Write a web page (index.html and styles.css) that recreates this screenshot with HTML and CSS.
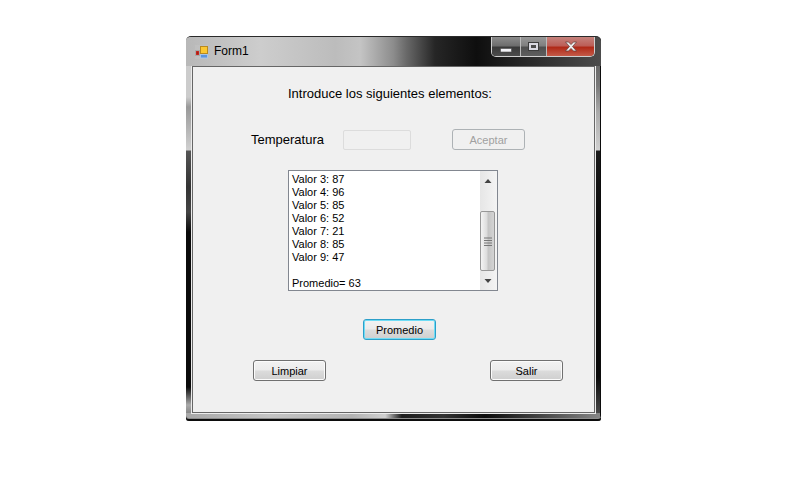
FILE: index.html
```html
<!DOCTYPE html>
<html lang="en">
<head>
    <meta charset="UTF-8">
    <title>Form1</title>
    <link rel="stylesheet" href="styles.css">
</head>
<body>
    <div class="window">
        <div class="titlebar">
            <svg class="app-icon" width="16" height="16" viewBox="0 0 16 16">
                <rect x="0" y="2" width="13" height="14" fill="#c4c4c4" opacity="0.5"/>
                <rect x="0.5" y="7.5" width="4" height="5" fill="#d63228" stroke="#a8a8a8"/>
                <rect x="1.5" y="8.5" width="2" height="3" fill="#a81c14"/>
                <rect x="5.5" y="3.5" width="7" height="7" fill="#fcc832" stroke="#b98a20"/>
                <rect x="5.5" y="11.5" width="7" height="3.5" fill="#5b94e0" stroke="#a8c4e8"/>
            </svg>
            <span class="title">Form1</span>
            <div class="caption">
                <div class="cap-btn cap-min">
                    <svg width="14" height="14" viewBox="0 0 14 14"><rect x="1.5" y="8.5" width="11" height="3.5" fill="#f2f2f6" stroke="#4a4a4a" stroke-width="0.6"/></svg>
                </div>
                <div class="cap-btn cap-max">
                    <svg width="13" height="12" viewBox="0 0 13 12"><rect x="1" y="1" width="11" height="9" fill="#3c3c3c"/><rect x="2" y="2" width="9" height="7" fill="#d8d8e0"/><rect x="4" y="4" width="5" height="3" fill="#4a4a4a"/></svg>
                </div>
                <div class="cap-btn cap-close">
                    <svg width="14" height="12" viewBox="0 0 14 12"><path d="M1.5 1h3l2.5 2.6 2.5-2.6h3l-4 4.5 4 4.5h-3l-2.5-2.6-2.5 2.6h-3l4-4.5z" fill="#f0f0f0" stroke="#5a3a38" stroke-width="0.7"/></svg>
                </div>
            </div>
        </div>
        <div class="client">
            <p class="heading">Introduce los siguientes elementos:</p>

            <div class="input-row">
                <span class="label">Temperatura</span>
                <input type="text" class="txtbox" disabled>
                <button class="btn btn-off" disabled>Aceptar</button>
            </div>

            <div class="listbox">
                <div class="list-text">
                    <div>Valor 3: 87</div>
                    <div>Valor 4: 96</div>
                    <div>Valor 5: 85</div>
                    <div>Valor 6: 52</div>
                    <div>Valor 7: 21</div>
                    <div>Valor 8: 85</div>
                    <div>Valor 9: 47</div>
                    <div>&nbsp;</div>
                    <div>Promedio= 63</div>
                </div>
                <div class="scrollbar">
                    <svg class="arrow" width="17" height="40" viewBox="0 0 17 40"><path d="M8 8l3.5 4h-7z" fill="#444"/></svg>
                    <div class="thumb">
                        <svg width="8" height="9" viewBox="0 0 8 9"><path d="M0 1h8M0 3.5h8M0 6h8M0 8.5h8" stroke="#777" fill="none"/></svg>
                    </div>
                    <svg class="arrow" width="17" height="19" viewBox="0 0 17 19"><path d="M4.5 8h7l-3.5 4z" fill="#444"/></svg>
                </div>
            </div>

            <button class="btn btn-focus">Promedio</button>

            <div class="bottom-row">
                <button class="btn">Limpiar</button>
                <button class="btn">Salir</button>
            </div>
        </div>
    </div>
</body>
</html>
```

FILE: styles.css
```css
* {
    box-sizing: border-box;
}
body {
    margin: 0;
    background-color: #fff;
    font-family: "Liberation Sans", Arial, sans-serif;
    color: #000;
}
.window {
    width: 415px;
    height: 385px;
    margin: 36px 0 0 186px;
    padding: 0 6px 8px 6px;
    display: flex;
    flex-direction: column;
    border-radius: 5px 5px 3px 3px;
    border-top: 1px solid #2a2a2a;
    overflow: hidden;
    background:
        linear-gradient(90deg, #a8a8a8 0, #c4c4c4 20%, #b4b4b4 40%, #d0d0d0 48%, #1c1c1c 52%, #333 62%, #0a0a0a 72%, #444 85%, #888 100%) bottom / 100% 8px no-repeat,
        linear-gradient(180deg, #ccc 0, #ccc 60px, #999 70px, #d0d0d0 113px, #555 114px, #333 150px, #444 175px, #0a0a0a 195px, #0a0a0a 350px, #aaa 368px, #666 384px) left / 6px 100% no-repeat,
        linear-gradient(180deg, #555 0, #777 48px, #aaa 75px, #d0d0d0 113px, #1c1c1c 114px, #0a0a0a 200px, #0a0a0a 340px, #555 384px) right / 6px 100% no-repeat;
    box-shadow: inset 0 -2px 0 #0c0c0c, inset 0 -3px 0 #8c8c8c, inset -1px 0 0 #0c0c0c;
}
.titlebar {
    height: 29px;
    margin: 0 -6px;
    padding-left: 9px;
    display: flex;
    align-items: center;
    position: relative;
    background: linear-gradient(90deg, #b8b8b8 0, #cdcdcd 18%, #bcbcbc 36%, #c4c4c4 42%, #8c8c8c 50%, #6a6a6a 53%, #262626 60%, #0e0e0e 70%, #242424 80%, #4c4c4c 100%);
}
.app-icon {
    margin-top: -1px;
}
.title {
    margin-left: 3px;
    font-size: 12px;
    margin-top: -2px;
}
.caption {
    position: absolute;
    top: 0;
    left: 305px;
    width: 104px;
    height: 20px;
    display: flex;
    border: 1px solid #cfcfcf;
    border-top: none;
    border-radius: 0 0 5px 5px;
    overflow: hidden;
}
.cap-btn {
    display: flex;
    align-items: center;
    justify-content: center;
}
.cap-min {
    width: 29px;
    border-right: 1px solid #bbb;
    background: linear-gradient(180deg, #8c8c8c 0, #6e6e6e 45%, #3a3a3a 55%, #4c4c4c 100%);
}
.cap-max {
    width: 26px;
    border-right: 1px solid #bbb;
    background: linear-gradient(180deg, #989898 0, #808080 45%, #505050 55%, #5e5e5e 100%);
}
.cap-close {
    flex: 1;
    background: linear-gradient(180deg, #c5827c 0, #bc5f58 45%, #b02a18 55%, #c45a48 100%);
}
.client {
    flex: 1;
    background-color: #f0f0f0;
    border: 1px solid #666;
    box-shadow: 0 0 0 1px #ececec;
    display: flex;
    flex-direction: column;
    align-items: flex-start;
}
.heading {
    margin: 18px 0 0 95px;
    font-size: 13px;
    line-height: 17px;
}
.input-row {
    margin: 27px 0 0 58px;
    display: flex;
    align-items: center;
}
.label {
    width: 92px;
    font-size: 13px;
}
.txtbox {
    width: 68px;
    height: 20px;
    background-color: #f0f0f0;
    border: 1px solid #dcdcdc;
    border-radius: 2px;
    padding: 0;
}
.btn {
    width: 73px;
    height: 21px;
    padding: 0;
    font-family: "Liberation Sans", Arial, sans-serif;
    font-size: 11px;
    color: #000;
    border: 1px solid #707070;
    border-radius: 3px;
    background: linear-gradient(180deg, #f2f2f2 0, #ebebeb 48%, #dcdcdc 52%, #cfcfcf 100%);
    box-shadow: inset 0 0 0 1px #fbfbfb;
}
.btn-off {
    margin-left: 41px;
    color: #a0a0a0;
    background: #f0f0f0;
    border-color: #adb2b5;
    box-shadow: none;
}
.btn-focus {
    margin: 28px 0 0 170px;
    border-color: #2c9fc9;
    box-shadow: inset 0 0 0 1px #6fdcf5;
    background: linear-gradient(180deg, #f2f2f2 0, #ebebeb 48%, #dcdcdc 52%, #cfcfcf 100%);
}
.listbox {
    width: 210px;
    height: 121px;
    margin: 20px 0 0 95px;
    display: flex;
    justify-content: space-between;
    background-color: #fff;
    border: 1px solid #828790;
}
.list-text {
    padding: 2px 0 0 3px;
    font-size: 11px;
    line-height: 13px;
}
.scrollbar {
    width: 17px;
    display: flex;
    flex-direction: column;
    background: linear-gradient(90deg, #e6e6e6 0, #f4f4f4 100%);
}
.arrow {
    display: block;
    flex-shrink: 0;
}
.thumb {
    width: 15px;
    height: 60px;
    display: flex;
    align-items: center;
    justify-content: center;
    border: 1px solid #979797;
    border-radius: 2px;
    background: linear-gradient(90deg, #f4f4f4 0, #dcdcdc 45%, #c4c4c4 55%, #d4d4d4 100%);
}
.bottom-row {
    width: 310px;
    margin: 20px 0 0 60px;
    display: flex;
    justify-content: space-between;
}
```
